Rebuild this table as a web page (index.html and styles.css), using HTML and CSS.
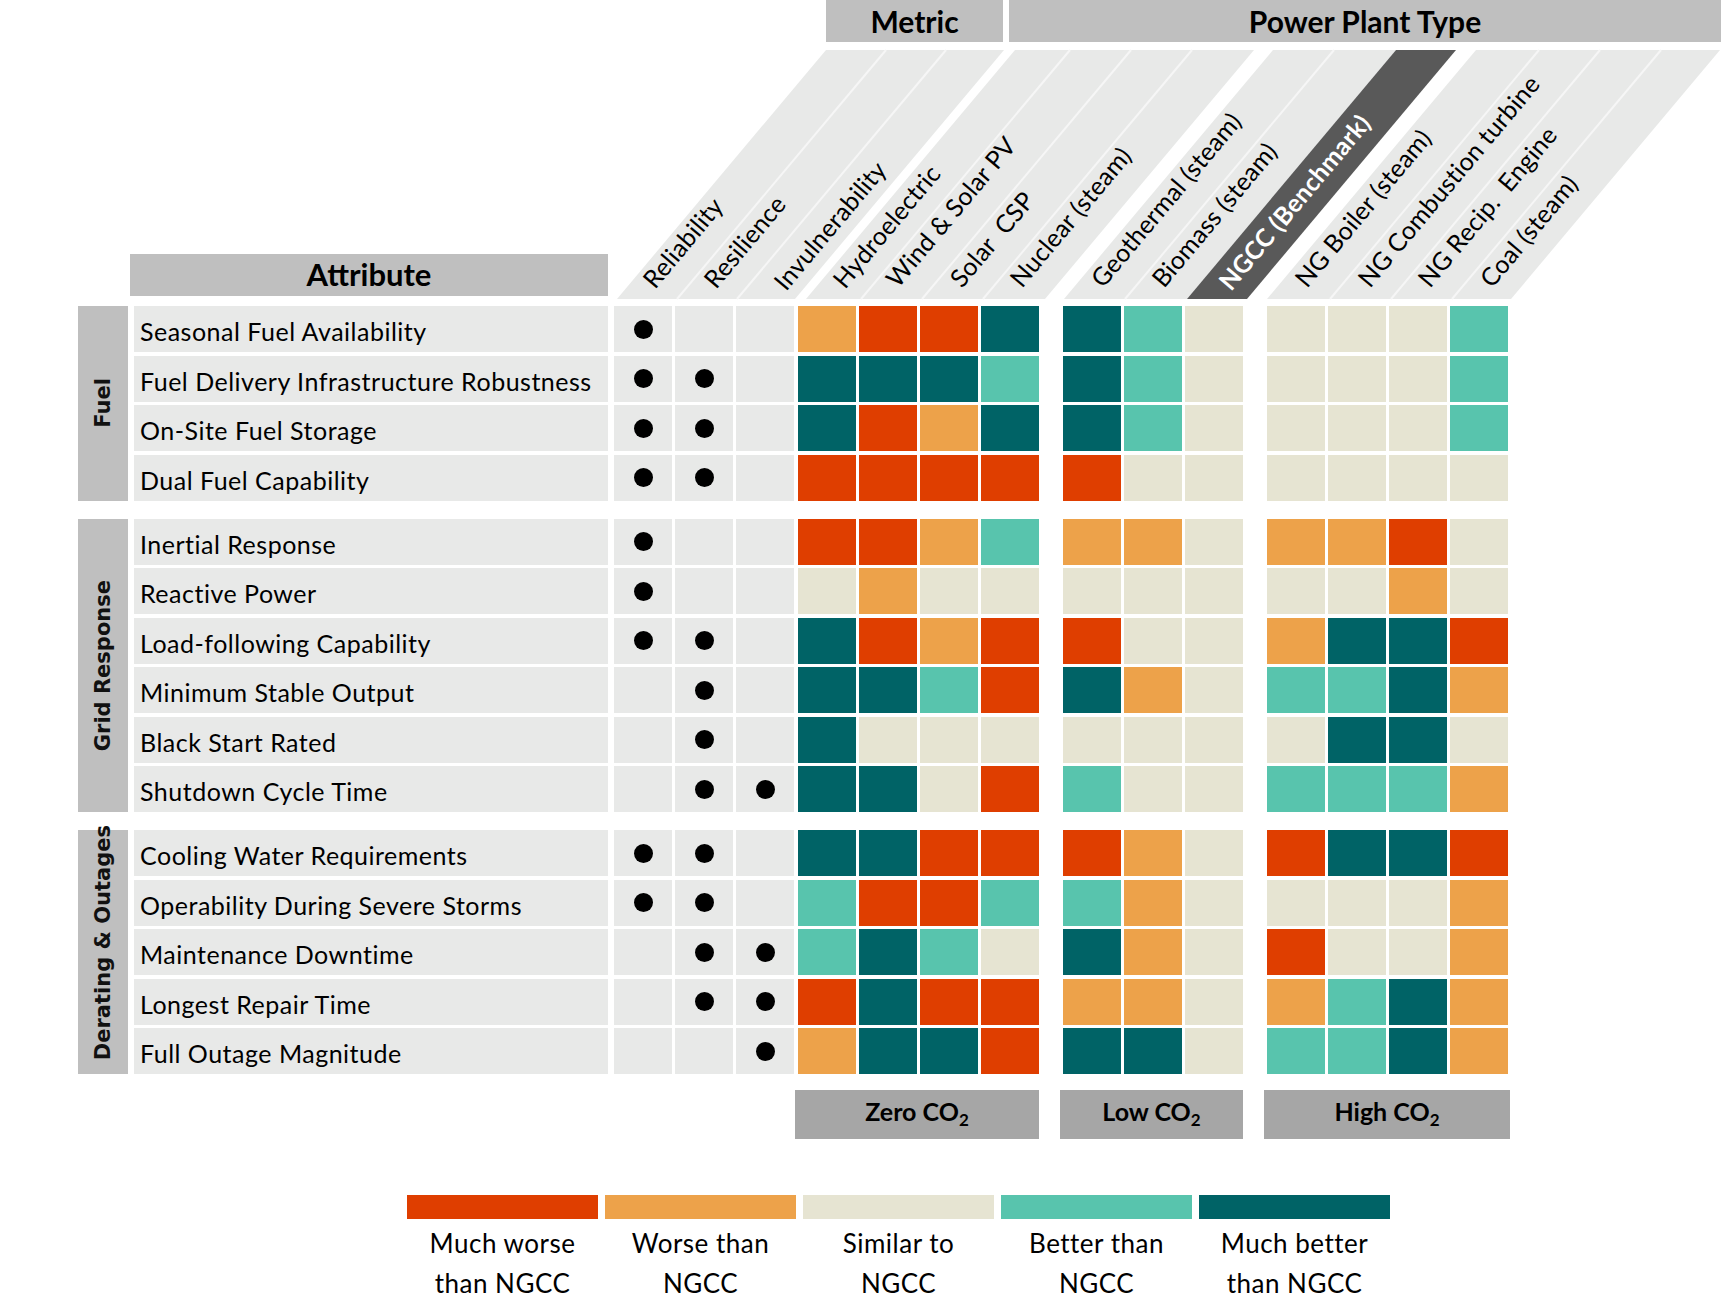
FILE: index.html
```html
<!DOCTYPE html>
<html lang="en">
<head>
<meta charset="utf-8">
<title>Power Plant Attribute Comparison</title>
<link rel="stylesheet" href="styles.css">
</head>
<body>
<div class="chart">
  <div class="top-bar">
    <div class="hdr hdr-metric">Metric</div>
    <div class="hdr hdr-type">Power Plant Type</div>
  </div>

  <div class="head-row">
    <div class="attr">Attribute</div>
    <svg class="slant" viewBox="0 0 1113 258" width="1113" height="258" xmlns="http://www.w3.org/2000/svg">
      <polygon class="band" points="5,257 183,257 392,8 214,8"/>
      <polygon class="band" points="194,257 433,257 642,8 403,8"/>
      <polygon class="band" points="452,257 575,257 784,8 661,8"/>
      <polygon class="band-dark" points="575,257 635,257 844,8 784,8"/>
      <polygon class="band" points="655,257 899,257 1108,8 864,8"/>
      <g class="div-lines">
        <line x1="65" y1="257" x2="274" y2="8"/>
        <line x1="125" y1="257" x2="334" y2="8"/>
        <line x1="249" y1="257" x2="458" y2="8"/>
        <line x1="310" y1="257" x2="519" y2="8"/>
        <line x1="371" y1="257" x2="580" y2="8"/>
        <line x1="513" y1="257" x2="722" y2="8"/>
        <line x1="718" y1="257" x2="927" y2="8"/>
        <line x1="779" y1="257" x2="988" y2="8"/>
        <line x1="840" y1="257" x2="1049" y2="8"/>
      </g>
      <g class="col-labels">
        <text transform="translate(43 248) rotate(-50)">Reliability</text>
        <text transform="translate(104 248) rotate(-50)">Resilience</text>
        <text transform="translate(174 250) rotate(-50)">Invulnerability</text>
        <text transform="translate(233 248) rotate(-50)">Hydroelectric</text>
        <text transform="translate(286 247) rotate(-50)">Wind &amp; Solar PV</text>
        <text transform="translate(350 247) rotate(-50)">Solar&#160; CSP</text>
        <text transform="translate(410 247) rotate(-50)">Nuclear (steam)</text>
        <text transform="translate(491 247) rotate(-50)">Geothermal (steam)</text>
        <text transform="translate(552 247) rotate(-50)">Biomass (steam)</text>
        <text class="bench" transform="translate(619 250) rotate(-50)">NGCC (Benchmark)</text>
        <text transform="translate(695 247) rotate(-50)">NG Boiler (steam)</text>
        <text transform="translate(758 247) rotate(-50)">NG Combustion turbine</text>
        <text transform="translate(818 247) rotate(-50)">NG Recip.&#160; Engine</text>
        <text transform="translate(880 247) rotate(-50)">Coal (steam)</text>
      </g>
    </svg>
  </div>

  <!-- Fuel -->
  <div class="group group-first">
    <div class="side"><span class="side-text">Fuel</span></div>
    <div class="rows">
      <div class="row">
        <div class="label">Seasonal Fuel Availability</div>
        <div class="set metrics"><div class="m"><i class="dot"></i></div><div class="m"></div><div class="m"></div></div>
        <div class="set zero"><div class="c vw"></div><div class="c mw"></div><div class="c mw"></div><div class="c mb"></div></div>
        <div class="set low"><div class="c mb"></div><div class="c bt"></div><div class="c sm"></div></div>
        <div class="set high"><div class="c sm"></div><div class="c sm"></div><div class="c sm"></div><div class="c bt"></div></div>
      </div>
      <div class="row">
        <div class="label">Fuel Delivery Infrastructure Robustness</div>
        <div class="set metrics"><div class="m"><i class="dot"></i></div><div class="m"><i class="dot"></i></div><div class="m"></div></div>
        <div class="set zero"><div class="c mb"></div><div class="c mb"></div><div class="c mb"></div><div class="c bt"></div></div>
        <div class="set low"><div class="c mb"></div><div class="c bt"></div><div class="c sm"></div></div>
        <div class="set high"><div class="c sm"></div><div class="c sm"></div><div class="c sm"></div><div class="c bt"></div></div>
      </div>
      <div class="row">
        <div class="label">On-Site Fuel Storage</div>
        <div class="set metrics"><div class="m"><i class="dot"></i></div><div class="m"><i class="dot"></i></div><div class="m"></div></div>
        <div class="set zero"><div class="c mb"></div><div class="c mw"></div><div class="c vw"></div><div class="c mb"></div></div>
        <div class="set low"><div class="c mb"></div><div class="c bt"></div><div class="c sm"></div></div>
        <div class="set high"><div class="c sm"></div><div class="c sm"></div><div class="c sm"></div><div class="c bt"></div></div>
      </div>
      <div class="row">
        <div class="label">Dual Fuel Capability</div>
        <div class="set metrics"><div class="m"><i class="dot"></i></div><div class="m"><i class="dot"></i></div><div class="m"></div></div>
        <div class="set zero"><div class="c mw"></div><div class="c mw"></div><div class="c mw"></div><div class="c mw"></div></div>
        <div class="set low"><div class="c mw"></div><div class="c sm"></div><div class="c sm"></div></div>
        <div class="set high"><div class="c sm"></div><div class="c sm"></div><div class="c sm"></div><div class="c sm"></div></div>
      </div>
    </div>
  </div>

  <!-- Grid Response -->
  <div class="group">
    <div class="side"><span class="side-text">Grid Response</span></div>
    <div class="rows">
      <div class="row">
        <div class="label">Inertial Response</div>
        <div class="set metrics"><div class="m"><i class="dot"></i></div><div class="m"></div><div class="m"></div></div>
        <div class="set zero"><div class="c mw"></div><div class="c mw"></div><div class="c vw"></div><div class="c bt"></div></div>
        <div class="set low"><div class="c vw"></div><div class="c vw"></div><div class="c sm"></div></div>
        <div class="set high"><div class="c vw"></div><div class="c vw"></div><div class="c mw"></div><div class="c sm"></div></div>
      </div>
      <div class="row">
        <div class="label">Reactive Power</div>
        <div class="set metrics"><div class="m"><i class="dot"></i></div><div class="m"></div><div class="m"></div></div>
        <div class="set zero"><div class="c sm"></div><div class="c vw"></div><div class="c sm"></div><div class="c sm"></div></div>
        <div class="set low"><div class="c sm"></div><div class="c sm"></div><div class="c sm"></div></div>
        <div class="set high"><div class="c sm"></div><div class="c sm"></div><div class="c vw"></div><div class="c sm"></div></div>
      </div>
      <div class="row">
        <div class="label">Load-following Capability</div>
        <div class="set metrics"><div class="m"><i class="dot"></i></div><div class="m"><i class="dot"></i></div><div class="m"></div></div>
        <div class="set zero"><div class="c mb"></div><div class="c mw"></div><div class="c vw"></div><div class="c mw"></div></div>
        <div class="set low"><div class="c mw"></div><div class="c sm"></div><div class="c sm"></div></div>
        <div class="set high"><div class="c vw"></div><div class="c mb"></div><div class="c mb"></div><div class="c mw"></div></div>
      </div>
      <div class="row">
        <div class="label">Minimum Stable Output</div>
        <div class="set metrics"><div class="m"></div><div class="m"><i class="dot"></i></div><div class="m"></div></div>
        <div class="set zero"><div class="c mb"></div><div class="c mb"></div><div class="c bt"></div><div class="c mw"></div></div>
        <div class="set low"><div class="c mb"></div><div class="c vw"></div><div class="c sm"></div></div>
        <div class="set high"><div class="c bt"></div><div class="c bt"></div><div class="c mb"></div><div class="c vw"></div></div>
      </div>
      <div class="row">
        <div class="label">Black Start Rated</div>
        <div class="set metrics"><div class="m"></div><div class="m"><i class="dot"></i></div><div class="m"></div></div>
        <div class="set zero"><div class="c mb"></div><div class="c sm"></div><div class="c sm"></div><div class="c sm"></div></div>
        <div class="set low"><div class="c sm"></div><div class="c sm"></div><div class="c sm"></div></div>
        <div class="set high"><div class="c sm"></div><div class="c mb"></div><div class="c mb"></div><div class="c sm"></div></div>
      </div>
      <div class="row">
        <div class="label">Shutdown Cycle Time</div>
        <div class="set metrics"><div class="m"></div><div class="m"><i class="dot"></i></div><div class="m"><i class="dot"></i></div></div>
        <div class="set zero"><div class="c mb"></div><div class="c mb"></div><div class="c sm"></div><div class="c mw"></div></div>
        <div class="set low"><div class="c bt"></div><div class="c sm"></div><div class="c sm"></div></div>
        <div class="set high"><div class="c bt"></div><div class="c bt"></div><div class="c bt"></div><div class="c vw"></div></div>
      </div>
    </div>
  </div>

  <!-- Derating & Outages -->
  <div class="group">
    <div class="side"><span class="side-text side-text-up">Derating &amp; Outages</span></div>
    <div class="rows">
      <div class="row">
        <div class="label">Cooling Water Requirements</div>
        <div class="set metrics"><div class="m"><i class="dot"></i></div><div class="m"><i class="dot"></i></div><div class="m"></div></div>
        <div class="set zero"><div class="c mb"></div><div class="c mb"></div><div class="c mw"></div><div class="c mw"></div></div>
        <div class="set low"><div class="c mw"></div><div class="c vw"></div><div class="c sm"></div></div>
        <div class="set high"><div class="c mw"></div><div class="c mb"></div><div class="c mb"></div><div class="c mw"></div></div>
      </div>
      <div class="row">
        <div class="label">Operability During Severe Storms</div>
        <div class="set metrics"><div class="m"><i class="dot"></i></div><div class="m"><i class="dot"></i></div><div class="m"></div></div>
        <div class="set zero"><div class="c bt"></div><div class="c mw"></div><div class="c mw"></div><div class="c bt"></div></div>
        <div class="set low"><div class="c bt"></div><div class="c vw"></div><div class="c sm"></div></div>
        <div class="set high"><div class="c sm"></div><div class="c sm"></div><div class="c sm"></div><div class="c vw"></div></div>
      </div>
      <div class="row">
        <div class="label">Maintenance Downtime</div>
        <div class="set metrics"><div class="m"></div><div class="m"><i class="dot"></i></div><div class="m"><i class="dot"></i></div></div>
        <div class="set zero"><div class="c bt"></div><div class="c mb"></div><div class="c bt"></div><div class="c sm"></div></div>
        <div class="set low"><div class="c mb"></div><div class="c vw"></div><div class="c sm"></div></div>
        <div class="set high"><div class="c mw"></div><div class="c sm"></div><div class="c sm"></div><div class="c vw"></div></div>
      </div>
      <div class="row">
        <div class="label">Longest Repair Time</div>
        <div class="set metrics"><div class="m"></div><div class="m"><i class="dot"></i></div><div class="m"><i class="dot"></i></div></div>
        <div class="set zero"><div class="c mw"></div><div class="c mb"></div><div class="c mw"></div><div class="c mw"></div></div>
        <div class="set low"><div class="c vw"></div><div class="c vw"></div><div class="c sm"></div></div>
        <div class="set high"><div class="c vw"></div><div class="c bt"></div><div class="c mb"></div><div class="c vw"></div></div>
      </div>
      <div class="row">
        <div class="label">Full Outage Magnitude</div>
        <div class="set metrics"><div class="m"></div><div class="m"></div><div class="m"><i class="dot"></i></div></div>
        <div class="set zero"><div class="c vw"></div><div class="c mb"></div><div class="c mb"></div><div class="c mw"></div></div>
        <div class="set low"><div class="c mb"></div><div class="c mb"></div><div class="c sm"></div></div>
        <div class="set high"><div class="c bt"></div><div class="c bt"></div><div class="c mb"></div><div class="c vw"></div></div>
      </div>
    </div>
  </div>

  <div class="co2-row">
    <div class="co2 co2-zero">Zero CO<sub>2</sub></div>
    <div class="co2 co2-low">Low CO<sub>2</sub></div>
    <div class="co2 co2-high">High CO<sub>2</sub></div>
  </div>

  <div class="legend">
    <div class="legend-bars">
      <div class="lb mw"></div>
      <div class="lb vw"></div>
      <div class="lb sm"></div>
      <div class="lb bt"></div>
      <div class="lb mb"></div>
    </div>
    <div class="legend-labels">
      <div class="ll">Much worse<br>than NGCC</div>
      <div class="ll">Worse than<br>NGCC</div>
      <div class="ll">Similar to<br>NGCC</div>
      <div class="ll">Better than<br>NGCC</div>
      <div class="ll">Much better<br>than NGCC</div>
    </div>
  </div>
</div>
</body>
</html>
```

FILE: styles.css
```css
* {
  box-sizing: border-box;
  margin: 0;
  padding: 0;
}

body {
  background: #ffffff;
  width: 1725px;
  height: 1308px;
  overflow: hidden;
  font-family: Lato, "Liberation Sans", sans-serif;
  color: #000000;
}

.chart {
  width: 1725px;
}

/* top headers */
.top-bar {
  display: flex;
  height: 42px;
  padding-left: 826px;
  gap: 6px;
}

.hdr {
  background: #bfbfbf;
  font-weight: 700;
  font-size: 30px;
  line-height: 42px;
  text-align: center;
  white-space: nowrap;
}

.hdr-metric { width: 177px; }
.hdr-type { width: 712px; }

.head-row {
  display: flex;
  height: 258px;
  align-items: flex-end;
}

.attr {
  margin-left: 130px;
  width: 478px;
  height: 42px;
  margin-bottom: 4px;
  background: #bfbfbf;
  font-weight: 700;
  font-size: 31px;
  line-height: 40px;
  text-align: center;
}

.slant {
  display: block;
  margin-left: 4px;
  width: 1113px;
  height: 258px;
  align-self: stretch;
}

.band { fill: #e8e9e8; }
.band-dark { fill: #595959; }

.div-lines line {
  stroke: #f6f6f6;
  stroke-width: 2;
}

.col-labels text {
  font-family: Lato, "Liberation Sans", sans-serif;
  font-size: 25px;
  letter-spacing: 0.2px;
  fill: #000000;
}

.col-labels .bench {
  font-weight: 700;
  fill: #ffffff;
}

/* groups */
.group {
  display: flex;
  margin-left: 78px;
  margin-top: 18px;
}

.group-first { margin-top: 6px; }

.side {
  width: 50px;
  margin-right: 6px;
  background: #bfbfbf;
  display: flex;
  align-items: center;
  justify-content: center;
  overflow: visible;
}

.side-text {
  writing-mode: vertical-rl;
  transform: rotate(180deg);
  font-family: "DejaVu Sans", Verdana, sans-serif;
  font-weight: 700;
  font-size: 21px;
  line-height: 1;
  white-space: nowrap;
  color: #111111;
}

.side-text-up { transform: rotate(180deg) translateX(0) translateY(9px); }

.rows {
  display: flex;
  flex-direction: column;
  gap: 3.5px;
}

.row {
  display: flex;
  height: 46px;
}

.label {
  width: 474px;
  margin-right: 6px;
  background: #e8e9e8;
  padding: 4px 0 0 6px;
  font-size: 25px;
  letter-spacing: 0.5px;
  line-height: 42px;
  white-space: nowrap;
}

.set {
  display: flex;
  gap: 3px;
}

.metrics { margin-right: 4px; }
.zero, .low { margin-right: 24px; }

.m {
  width: 58px;
  background: #e8e9e8;
  display: flex;
  align-items: center;
  justify-content: center;
}

.dot {
  display: block;
  width: 19px;
  height: 19px;
  border-radius: 50%;
  background: #000000;
}

.c { width: 58px; }

/* rating colours */
.mw { background: #df3e00; }
.vw { background: #eda24a; }
.sm { background: #e6e4d2; }
.bt { background: #58c4ad; }
.mb { background: #006366; }

/* CO2 group labels */
.co2-row {
  display: flex;
  margin-top: 16px;
  padding-left: 795px;
  gap: 21px;
}

.co2 {
  height: 49px;
  background: #a6a6a6;
  font-weight: 700;
  font-size: 25px;
  line-height: 42px;
  text-align: center;
}

.co2 sub {
  font-size: 17px;
  vertical-align: -5px;
  line-height: 0;
}

.co2-zero { width: 244px; }
.co2-low { width: 183px; }
.co2-high { width: 246px; }

/* legend */
.legend {
  margin-top: 56px;
  padding-left: 407px;
}

.legend-bars,
.legend-labels {
  display: flex;
  gap: 7px;
}

.lb {
  width: 191px;
  height: 24px;
}

.legend-labels { margin-top: 4px; }

.ll {
  width: 191px;
  text-align: center;
  font-size: 26px;
  letter-spacing: 0.5px;
  line-height: 40px;
}
```
